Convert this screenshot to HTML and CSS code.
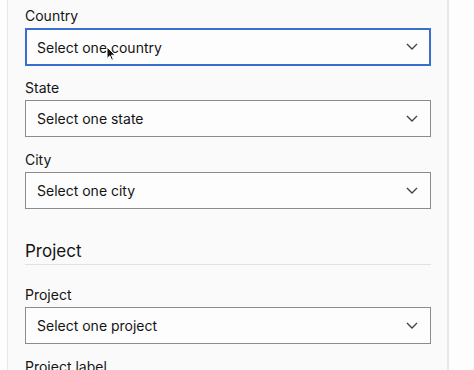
FILE: index.html
```html
<!DOCTYPE html>
<html lang="en">
<head>
    <meta charset="UTF-8">
    <meta name="viewport" content="width=device-width, initial-scale=1.0">
    <title>Location form</title>
    <link rel="stylesheet" href="styles.css">
</head>
<body>

    <div class="panel">
        <div class="field">
            <label for="country">Country</label>
            <div class="select-wrap focused">
                <select id="country">
                    <option>Select one country</option>
                </select>
                <svg class="chevron" viewBox="0 0 12 7" width="12" height="7"><path d="M1 1l5 5 5-5" fill="none" stroke="#444" stroke-width="1.4"/></svg>
            </div>
            <svg class="pointer" viewBox="0 0 10 15" width="10" height="15"><path d="M1 1v11.5l2.8-2.6 1.9 4.3 1.7-.8-1.9-4.2H9.2z" fill="#111" stroke="#fff" stroke-width="1"/></svg>
        </div>

        <div class="field">
            <label for="state">State</label>
            <div class="select-wrap">
                <select id="state">
                    <option>Select one state</option>
                </select>
                <svg class="chevron" viewBox="0 0 12 7" width="12" height="7"><path d="M1 1l5 5 5-5" fill="none" stroke="#444" stroke-width="1.4"/></svg>
            </div>
        </div>

        <div class="field">
            <label for="city">City</label>
            <div class="select-wrap">
                <select id="city">
                    <option>Select one city</option>
                </select>
                <svg class="chevron" viewBox="0 0 12 7" width="12" height="7"><path d="M1 1l5 5 5-5" fill="none" stroke="#444" stroke-width="1.4"/></svg>
            </div>
        </div>

        <h3 class="section-title">Project</h3>

        <div class="field">
            <label for="project">Project</label>
            <div class="select-wrap">
                <select id="project">
                    <option>Select one project</option>
                </select>
                <svg class="chevron" viewBox="0 0 12 7" width="12" height="7"><path d="M1 1l5 5 5-5" fill="none" stroke="#444" stroke-width="1.4"/></svg>
            </div>
        </div>

        <div class="field">
            <label for="label">Project label</label>
        </div>
    </div>

</body>
</html>
```

FILE: styles.css
```css
body {
    margin: 0;
    background: #fdfdfd;
    font-family: Inter, "Noto Sans", sans-serif;
    color: #141414;
    overflow: hidden;
}
.panel {
    box-sizing: border-box;
    margin-left: 7px;
    width: 442px;
    padding: 7px 16px 0 17px;
    background: #fafafa;
    border-left: 1px solid #e8e8e8;
    border-right: 2px solid #e8e8e8;
    height: 370px;
}
.field {
    position: relative;
    margin-bottom: 14px;
}
.field label {
    display: block;
    font-size: 14px;
    line-height: 18px;
    margin-bottom: 3px;
}
.select-wrap {
    position: relative;
    height: 37px;
}
.select-wrap select {
    appearance: none;
    -webkit-appearance: none;
    width: 100%;
    height: 37px;
    margin: 0;
    padding: 0 11px;
    border: 1px solid #8c8c8c;
    border-radius: 0;
    background: #fdfdfd;
    font-family: inherit;
    font-size: 14px;
    color: #141414;
    outline: none;
}
.select-wrap.focused select {
    border: 2px solid #3b6fce;
    padding-left: 10px;
    height: 38px;
}
.chevron {
    position: absolute;
    right: 13px;
    top: 15px;
    pointer-events: none;
}
.pointer {
    position: absolute;
    left: 81px;
    top: 39px;
}
.section-title {
    margin: 31px 0 21px;
    padding-bottom: 2px;
    font-size: 17px;
    line-height: 22px;
    font-weight: 400;
    border-bottom: 1px solid #e2e2e2;
}
```
